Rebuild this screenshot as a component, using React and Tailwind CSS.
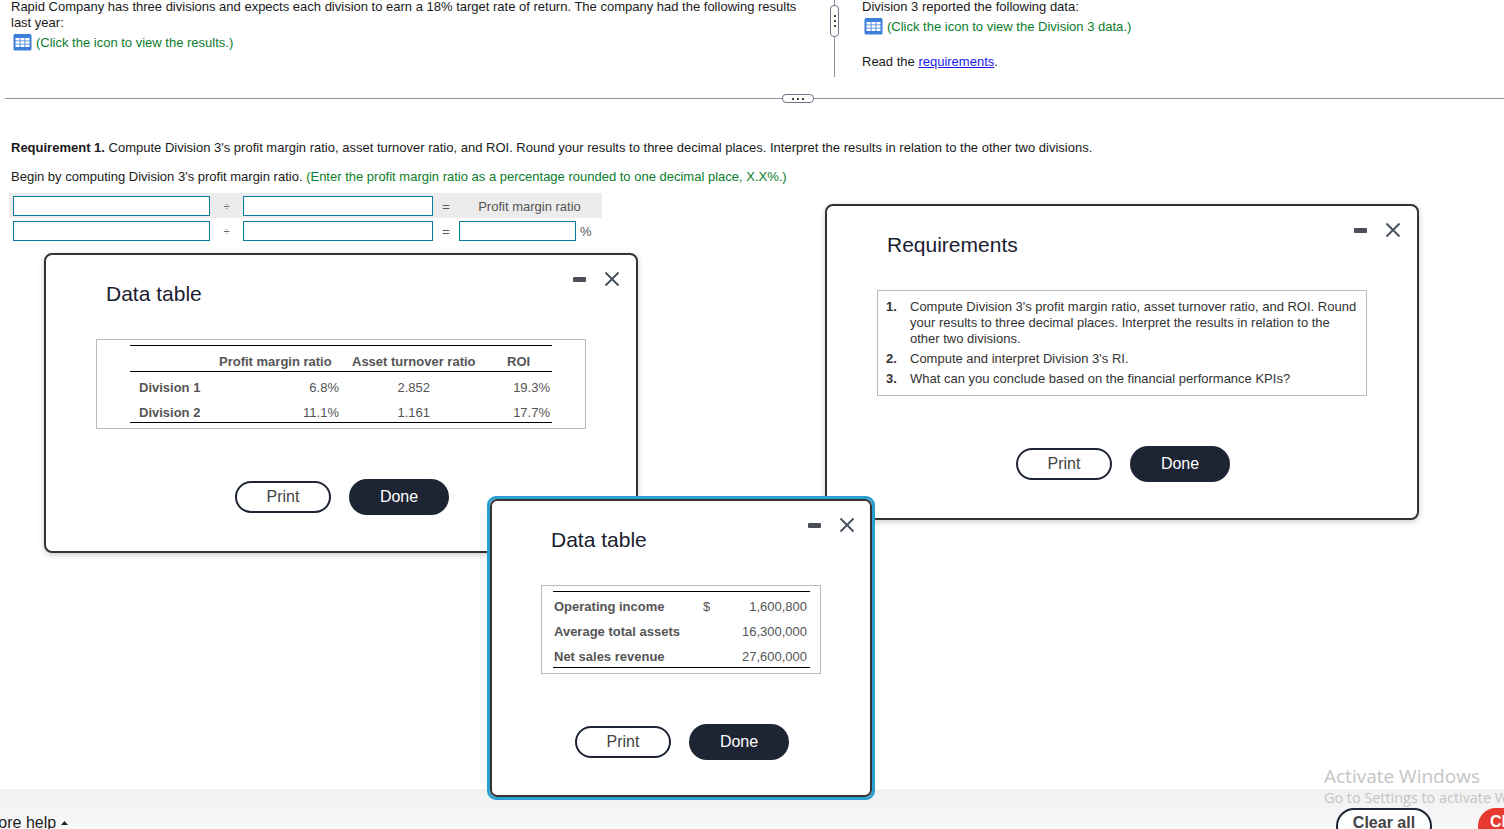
import React from 'react'

function GridIcon(){
  return (
    <svg className="w-[19px] h-[17px] shrink-0" viewBox="0 0 19 17" aria-hidden="true">
      <rect x="0.5" y="0" width="18" height="16.5" rx="1.5" fill="#3b7fd9" />
      <path d="M2.5 4h4.2v2.4H2.5zM7.5 4h4v2.4h-4zM12.3 4h4.2v2.4h-4.2zM2.5 7.3h4.2v2.4H2.5zM7.5 7.3h4v2.4h-4zM12.3 7.3h4.2v2.4h-4.2zM2.5 10.6h4.2V13H2.5zM7.5 10.6h4V13h-4zM12.3 10.6h4.2V13h-4.2z" fill="#fff" />
    </svg>
  )
}

function WinControls({ pos = 'top-[16px] right-[16px]' }){
  return (
    <div className={`absolute ${pos} flex items-center gap-[18px]`}>
      <div className="w-[13px] h-[5px] rounded-[1px] bg-[#4b4f57] mt-[1px]" />
      <svg className="w-[16px] h-[16px]" viewBox="0 0 16 16" aria-hidden="true">
        <path d="M1.5 1.5l13 13M14.5 1.5l-13 13" stroke="#46505e" strokeWidth="1.9" fill="none" />
      </svg>
    </div>
  )
}

function DialogButtons({ ml = 'ml-[189px]' }){
  return (
    <div className={`flex items-center gap-[18px] ${ml}`}>
      <div className="w-[96px] h-[32px] rounded-full border-2 border-[#1d2433] bg-white flex items-center justify-center text-[16px] text-[#444]">Print</div>
      <div className="w-[100px] h-[36px] rounded-full bg-[#1d2433] flex items-center justify-center text-[16px] text-white">Done</div>
    </div>
  )
}

function Input({ w }){
  return <div className={`${w} h-[20px] border border-[#0b7a9b] bg-white shrink-0`} />
}

export default function App(){
  return (
    <div className="relative w-[1504px] h-[829px] overflow-hidden bg-white font-['Liberation_Sans',Arial,sans-serif] text-[13px] leading-[16px] text-[#1a1a1a]">
      {/* top split pane */}
      <div className="flex h-[77px]">
        <div className="w-[834px] pl-[11px] pr-[30px] -mt-[1px]">
          <p>Rapid Company has three divisions and expects each division to earn a 18% target rate of return. The company had the following results last year:</p>
          <div className="flex items-center gap-[4px] mt-[3px] ml-[2px] text-[#0a7d2c]">
            <GridIcon />
            <span>(Click the icon to view the results.)</span>
          </div>
        </div>
        <div className="relative w-px h-[77px] bg-[#8a93a3]">
          <div className="absolute left-[-4px] top-[5px] w-[9px] h-[32px] rounded-[4px] border border-[#6d7686] bg-white flex flex-col items-center justify-center gap-[3px]">
            <span className="w-[2px] h-[2px] bg-[#444]" />
            <span className="w-[2px] h-[2px] bg-[#444]" />
            <span className="w-[2px] h-[2px] bg-[#444]" />
          </div>
        </div>
        <div className="pl-[27px] -mt-[1px]">
          <p>Division 3 reported the following data:</p>
          <div className="flex items-center gap-[4px] mt-[3px] ml-[2px] text-[#0a7d2c]">
            <GridIcon />
            <span>(Click the icon to view the Division 3 data.)</span>
          </div>
          <p className="mt-[19px]">Read the <span className="text-[#1a1aee] underline">requirements</span>.</p>
        </div>
      </div>

      {/* horizontal divider */}
      <div className="relative ml-[5px] mt-[21px] h-px bg-[#8a93a3]">
        <div className="absolute left-[777px] top-[-4px] w-[32px] h-[9px] rounded-[4px] border border-[#6d7686] bg-white flex items-center justify-center gap-[3px]">
          <span className="w-[2px] h-[2px] bg-[#444]" />
          <span className="w-[2px] h-[2px] bg-[#444]" />
          <span className="w-[2px] h-[2px] bg-[#444]" />
        </div>
      </div>

      <div className="pl-[11px] pt-[41px]">
        <p><b>Requirement 1.</b> Compute Division 3's profit margin ratio, asset turnover ratio, and ROI. Round your results to three decimal places. Interpret the results in relation to the other two divisions.</p>
        <p className="mt-[13px]">Begin by computing Division 3's profit margin ratio. <span className="text-[#0a7d2c]">(Enter the profit margin ratio as a percentage rounded to one decimal place, X.X%.)</span></p>
      </div>

      {/* formula */}
      <div className="ml-[9px] mt-[8px] w-[593px] text-[#555]">
        <div className="flex items-center h-[25px] bg-[#ececec] pl-[4px]">
          <Input w="w-[197px]" />
          <span className="w-[33px] text-center text-[#666] text-[11px]">÷</span>
          <Input w="w-[190px]" />
          <span className="w-[26px] text-center pt-[2px]">=</span>
          <span className="w-[141px] text-center pt-[3px]">Profit margin ratio</span>
        </div>
        <div className="flex items-center h-[25px] pl-[4px]">
          <Input w="w-[197px]" />
          <span className="w-[33px] text-center text-[#666] text-[11px]">÷</span>
          <Input w="w-[190px]" />
          <span className="w-[26px] text-center pt-[2px]">=</span>
          <Input w="w-[117px]" />
          <span className="ml-[4px] pt-[3px]">%</span>
        </div>
      </div>

      {/* bottom bar */}
      <div className="absolute left-0 right-0 bottom-0 h-[40px] bg-gradient-to-b from-[#f1f1f1] to-[#f8f8f8]">
        <div className="absolute left-[-15px] top-[26px] flex items-center gap-[5px] text-[16px] text-[#222]">
          <span>More help</span>
          <svg className="w-[7px] h-[4px]" viewBox="0 0 7 4" aria-hidden="true"><path d="M3.5 0L7 4H0z" fill="#222" /></svg>
        </div>
        <div className="absolute left-[1336px] top-[19px] w-[96px] h-[36px] rounded-full border-2 border-[#1d2433] bg-white text-center text-[16px] leading-[26px] font-bold text-[#444]">Clear all</div>
        <div className="absolute left-[1478px] top-[19px] w-[96px] h-[36px] rounded-full bg-[#e8392f] pl-[12px] text-[16px] leading-[28px] font-bold text-white">Check answer</div>
      </div>

      {/* requirements window */}
      <div className="absolute left-[825px] top-[204px] w-[594px] h-[316px] rounded-[8px] border-2 border-[#333] bg-white shadow-[0_2px_6px_rgba(0,0,0,0.2)]">
        <WinControls />
        <h2 className="ml-[60px] mt-[27px] text-[21px] leading-[24px] text-[#1a2030]">Requirements</h2>
        <div className="ml-[50px] mt-[33px] w-[490px] h-[106px] border border-[#bbb] pt-[8px] pl-[8px] pr-[8px] text-[#333]">
          <div className="flex">
            <b className="w-[24px] shrink-0">1.</b>
            <span>Compute Division 3's profit margin ratio, asset turnover ratio, and ROI. Round your results to three decimal places. Interpret the results in relation to the other two divisions.</span>
          </div>
          <div className="flex mt-[4px]">
            <b className="w-[24px] shrink-0">2.</b>
            <span>Compute and interpret Division 3's RI.</span>
          </div>
          <div className="flex mt-[4px]">
            <b className="w-[24px] shrink-0">3.</b>
            <span>What can you conclude based on the financial performance KPIs?</span>
          </div>
        </div>
        <div className="mt-[50px]">
          <DialogButtons />
        </div>
      </div>

      {/* division results window */}
      <div className="absolute left-[44px] top-[253px] w-[594px] h-[300px] rounded-[8px] border-2 border-[#333] bg-white shadow-[0_2px_6px_rgba(0,0,0,0.2)]">
        <WinControls />
        <h2 className="ml-[60px] mt-[27px] text-[21px] leading-[24px] text-[#1a2030]">Data table</h2>
        <div className="ml-[50px] mt-[33px] w-[490px] h-[90px] border border-[#bbb] px-[33px] pt-[5px] text-[#555]">
          <div className="border-t border-b border-black h-[27px] flex items-center font-bold pt-[7px]">
            <span className="w-[89px]" />
            <span className="w-[112px] whitespace-nowrap">Profit margin ratio</span>
            <span className="w-[21px]" />
            <span className="w-[155px] whitespace-nowrap">Asset turnover ratio</span>
            <span>ROI</span>
          </div>
          <div className="flex items-center h-[25px] pt-[6px]">
            <span className="w-[120px] pl-[9px] font-bold">Division 1</span>
            <span className="w-[89px] text-right">6.8%</span>
            <span className="w-[91px] text-right">2.852</span>
            <span className="w-[120px] text-right">19.3%</span>
          </div>
          <div className="flex items-center h-[26px] pt-[6px] border-b border-black">
            <span className="w-[120px] pl-[9px] font-bold">Division 2</span>
            <span className="w-[89px] text-right">11.1%</span>
            <span className="w-[91px] text-right">1.161</span>
            <span className="w-[120px] text-right">17.7%</span>
          </div>
        </div>
        <div className="mt-[50px]">
          <DialogButtons />
        </div>
      </div>

      {/* division 3 window, focused */}
      <div className="absolute left-[487px] top-[496px] w-[388px] h-[304px] rounded-[9px] border-[3px] border-[#2b9ed1] bg-white">
        <div className="relative h-full rounded-[7px] border-2 border-[#333]">
          <WinControls pos="top-[16px] right-[15px]" />
          <h2 className="ml-[59px] mt-[27px] text-[21px] leading-[24px] text-[#1a2030]">Data table</h2>
          <div className="ml-[49px] mt-[33px] w-[280px] h-[89px] border border-[#bbb] pl-[11px] pr-[10px] pt-[5px] text-[#555]">
            <div className="border-t border-black flex items-center h-[29px] pt-[2px]">
              <span className="w-[150px] pl-[1px] font-bold">Operating income</span>
              <span className="w-[20px]">$</span>
              <span className="w-[84px] text-right">1,600,800</span>
            </div>
            <div className="flex items-center h-[24px]">
              <span className="w-[170px] pl-[1px] font-bold">Average total assets</span>
              <span className="w-[84px] text-right">16,300,000</span>
            </div>
            <div className="flex items-center h-[24px] pt-[3px] border-b border-black">
              <span className="w-[170px] pl-[1px] font-bold">Net sales revenue</span>
              <span className="w-[84px] text-right">27,600,000</span>
            </div>
          </div>
          <div className="mt-[50px]">
            <DialogButtons ml="ml-[83px]" />
          </div>
        </div>
      </div>

      {/* windows activation watermark */}
      <div className="absolute left-[1324px] top-[764px] whitespace-nowrap font-['Open_Sans',sans-serif] text-[#c4c4c4]">
        <div className="text-[19px] leading-[24px]">Activate Windows</div>
        <div className="text-[14.4px] leading-[20px]">Go to Settings to activate Windows.</div>
      </div>
    </div>
  )
}
